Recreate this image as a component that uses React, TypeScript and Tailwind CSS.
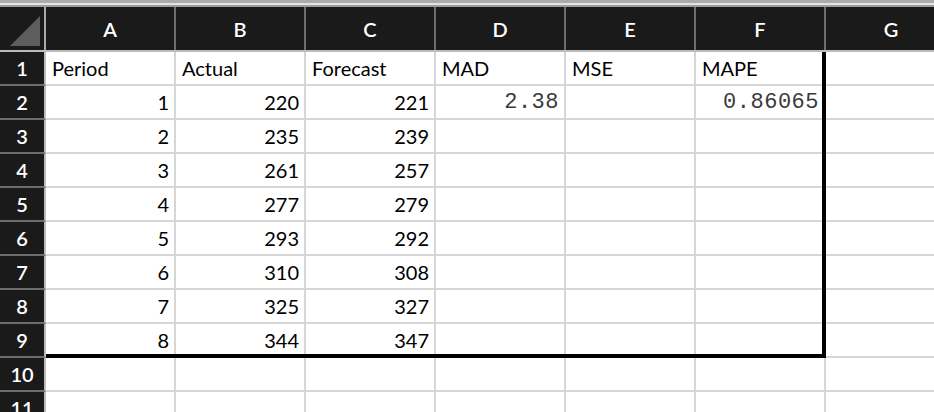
import React from "react";

const cols = ["A", "B", "C", "D", "E", "F", "G"];

type Cell = { v: string; align?: "l" | "r"; mono?: boolean };

const L = (v: string): Cell => ({ v, align: "l" });
const R = (v: string): Cell => ({ v, align: "r" });
const M = (v: string): Cell => ({ v, align: "r", mono: true });
const E: Cell = { v: "" };

const rows: Cell[][] = [
  [L("Period"), L("Actual"), L("Forecast"), L("MAD"), L("MSE"), L("MAPE"), E],
  [R("1"), R("220"), R("221"), M("2.38"), E, M("0.86065"), E],
  [R("2"), R("235"), R("239"), E, E, E, E],
  [R("3"), R("261"), R("257"), E, E, E, E],
  [R("4"), R("277"), R("279"), E, E, E, E],
  [R("5"), R("293"), R("292"), E, E, E, E],
  [R("6"), R("310"), R("308"), E, E, E, E],
  [R("7"), R("325"), R("327"), E, E, E, E],
  [R("8"), R("344"), R("347"), E, E, E, E],
  [E, E, E, E, E, E, E],
  [E, E, E, E, E, E, E],
];

export default function App() {
  return (
    <div
      className="w-[934px] h-[412px] overflow-hidden bg-white"
      style={{ fontFamily: "Lato, 'Liberation Sans', sans-serif" }}
    >
      {/* top strip */}
      <div className="h-[3px] bg-[#ababab]" />
      <div className="h-[2px] bg-[#e4e4e4]" />
      <div className="h-[2px] bg-[#9c9c9c]" />

      {/* header */}
      <div className="flex h-[45px] bg-[#1a1a1a] border-b-2 border-[#bcbcbc]">
        <div className="relative w-[46px] shrink-0 border-r-2 border-[#a9a9a9]">
          <svg className="absolute left-[10px] top-[9px]" width="30" height="30" viewBox="0 0 30 30">
            <polygon points="30,0 30,30 0,30" fill="#5d5d5d" />
          </svg>
        </div>
        {cols.map((c, i) => (
          <div
            key={c}
            className={`w-[130px] shrink-0 flex items-center justify-center text-white text-[20px] font-semibold ${
              i < cols.length - 1 ? "border-r-2 border-[#6e6e6e]" : ""
            }`}
          >
            {c}
          </div>
        ))}
      </div>

      {/* body */}
      <div className="relative">
        {rows.map((r, ri) => (
          <div key={ri} className="flex h-[34px]">
            <div className="w-[46px] shrink-0 bg-[#1a1a1a] border-r-2 border-r-[#bcbcbc] border-b-2 border-b-[#6c6c6c] flex items-center justify-center text-white text-[20px] font-semibold">
              {ri + 1}
            </div>
            {r.map((cell, ci) => (
              <div
                key={ci}
                className={`w-[130px] shrink-0 border-r-2 border-b-2 border-[#d6d6d6] flex items-center text-[20px] text-black ${
                  cell.align === "l" ? "justify-start pl-[6px]" : "justify-end pr-[5px]"
                }`}
              >
                {cell.mono ? (
                  <span
                    className="text-[22px] text-[#3a3a3a] tracking-[0.5px]"
                    style={{ fontFamily: "'Liberation Mono', monospace" }}
                  >
                    {cell.v}
                  </span>
                ) : (
                  cell.v
                )}
              </div>
            ))}
          </div>
        ))}
        {/* selection-style thick border overlay */}
        <div className="absolute left-[46px] top-0 w-[780px] h-[306px] border-r-4 border-b-4 border-black pointer-events-none" />
      </div>
    </div>
  );
}
